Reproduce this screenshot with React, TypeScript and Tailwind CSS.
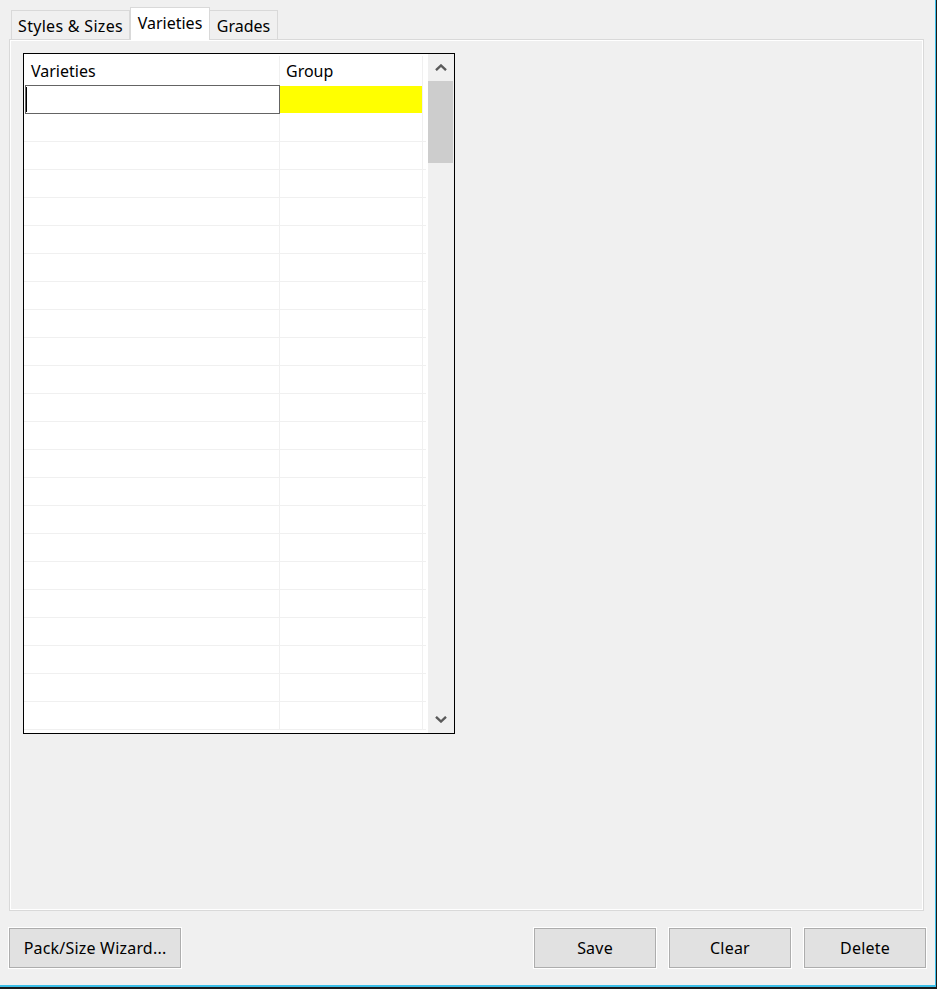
import React from "react";

const ROWS = 22;

function Chevron({ up }: { up?: boolean }) {
  return (
    <svg width="12" height="7" viewBox="0 0 12 7" className="block">
      <polyline
        points={up ? "1,6.2 6,1.5 11,6.2" : "1,0.8 6,5.5 11,0.8"}
        fill="none"
        stroke="#5a5a5a"
        strokeWidth="2.4"
      />
    </svg>
  );
}

function Button({ label, className }: { label: string; className: string }) {
  return (
    <button
      type="button"
      className={`h-[42px] bg-[#e1e1e1] border border-white shadow-[inset_0_0_0_1px_#adadad] text-[16px] text-black tracking-[0.2px] flex items-center justify-center ${className}`}
    >
      {label}
    </button>
  );
}

export default function App() {
  return (
    <div
      className="w-[937px] h-[989px] border-r border-b-2 border-[#1a1a1a]"
      style={{ fontFamily: '"Noto Sans", "Open Sans", sans-serif' }}
    >
      <div className="w-full h-full border-r border-b-2 border-[#3cbfe8] bg-[#f0f0f0] flex flex-col">
        {/* tab strip */}
        <div className="h-[39px] pl-[11px] flex items-end">
          <div className="h-[29px] w-[119px] border border-b-0 border-[#d9d9d9] flex items-center justify-center text-[16px] text-black tracking-[0.3px] pt-px">
            Styles &amp; Sizes
          </div>
          <div className="relative z-10 -mb-px h-[33px] w-[80px] border border-b-0 border-[#d9d9d9] bg-white flex items-center justify-center text-[16px] text-black pb-[2px]">
            Varieties
          </div>
          <div className="h-[29px] w-[68px] border border-l-0 border-b-0 border-[#d9d9d9] flex items-center justify-center text-[16px] text-black pt-px">
            Grades
          </div>
        </div>

        {/* tab panel */}
        <div className="ml-[9px] w-[915px] h-[872px] border border-[#d9d9d9] shadow-[inset_0_0_0_1px_#ffffff] pl-[13px] pt-[13px]">
          <div className="w-[432px] h-[681px] border border-black bg-white flex overflow-hidden">
            <div className="w-[402px] flex flex-col overflow-hidden">
              <div className="h-[31px] shrink-0 flex text-[16px] text-black pt-[2px]">
                <div className="w-[256px] border-r border-[#f0f0f0] pl-[7px] flex items-center">Varieties</div>
                <div className="w-[143px] border-r border-[#f0f0f0] pl-[6px] flex items-center">Group</div>
              </div>
              <div className="h-[29px] shrink-0 flex">
                <div className="w-[256px] pl-px">
                  <div className="h-full border border-[#646464] relative">
                    <div className="absolute left-0 top-[1px] w-px h-[25px] bg-black" />
                  </div>
                </div>
                <div className="w-[143px] border-r border-[#f0f0f0] pt-px pb-px">
                  <div className="h-full bg-[#ffff00]" />
                </div>
              </div>
              {Array.from({ length: ROWS }).map((_, i) => (
                <div key={i} className="h-[28px] shrink-0 flex border-b border-[#f0f0f0]">
                  <div className="w-[256px] border-r border-[#f0f0f0]" />
                  <div className="w-[143px] border-r border-[#f0f0f0]" />
                </div>
              ))}
            </div>
            <div className="w-[2px] shrink-0" />
            <div className="w-[26px] shrink-0 bg-[#f0f0f0] flex flex-col">
              <div className="h-[27px] flex items-center justify-center">
                <Chevron up />
              </div>
              <div className="h-[82px] mr-px bg-[#cdcdcd]" />
              <div className="flex-1" />
              <div className="h-[27px] flex items-center justify-center">
                <Chevron />
              </div>
            </div>
          </div>
        </div>

        {/* buttons */}
        <div className="mt-[16px] px-[8px] flex justify-between">
          <Button label="Pack/Size Wizard..." className="w-[174px]" />
          <div className="flex gap-[11px]">
            <Button label="Save" className="w-[124px]" />
            <Button label="Clear" className="w-[124px]" />
            <Button label="Delete" className="w-[124px]" />
          </div>
        </div>
      </div>
    </div>
  );
}
